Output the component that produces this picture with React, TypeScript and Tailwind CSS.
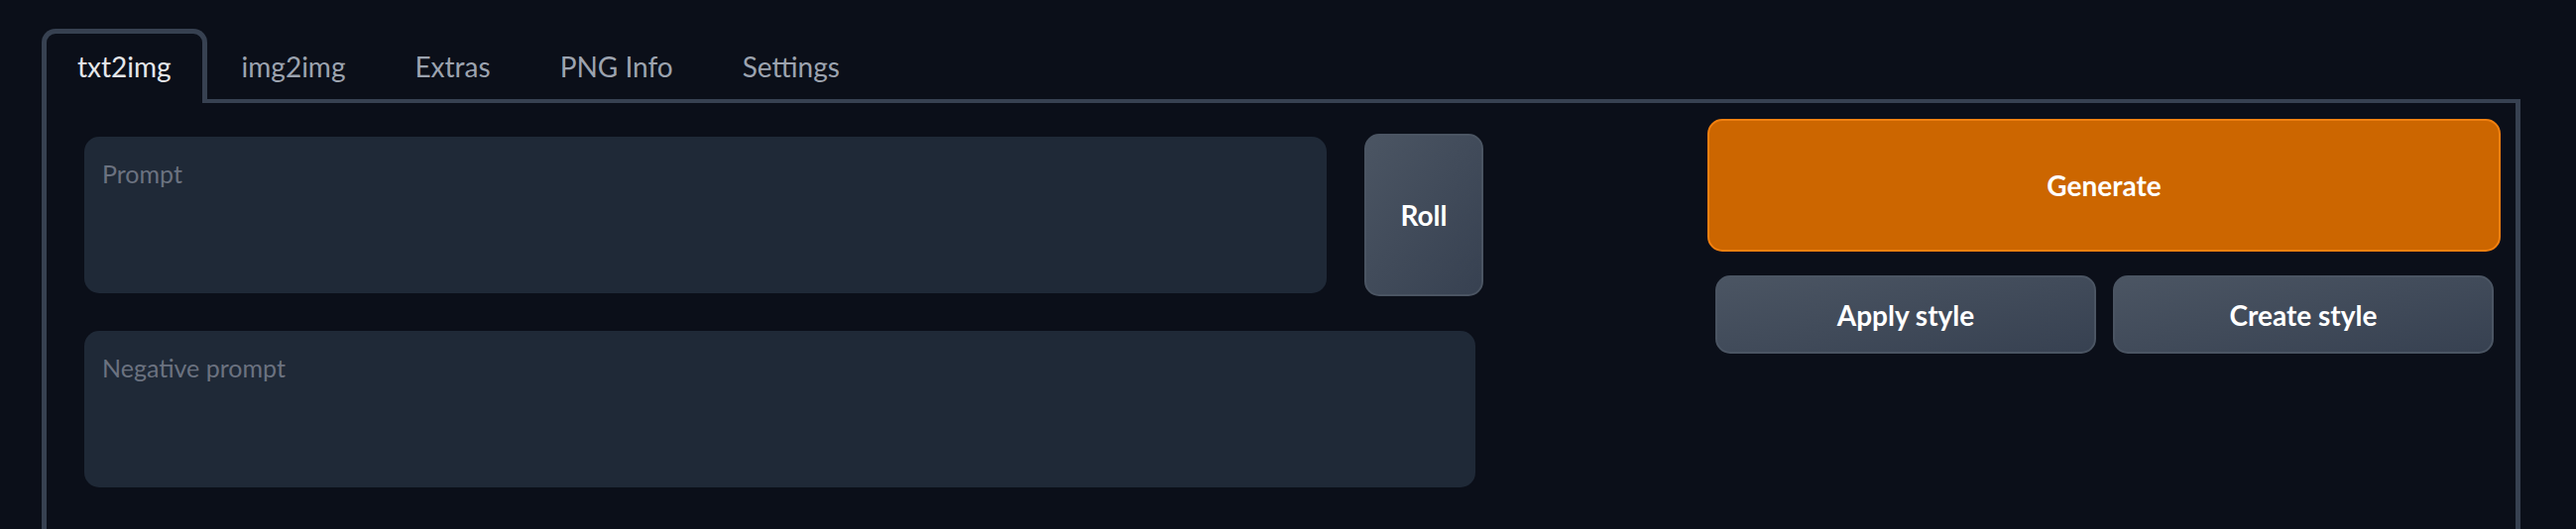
const tabs = ["img2img", "Extras", "PNG Info", "Settings"];

function GrayButton({ label, className }: { label: string; className: string }) {
  return (
    <button
      className={`flex items-center justify-center rounded-[15px] border-2 border-[#4b5563] bg-gradient-to-br from-[#4b5563] to-[#374151] text-[28px] font-bold text-white ${className}`}
    >
      {label}
    </button>
  );
}

export default function App() {
  return (
    <div className="h-[534px] w-[2598px] overflow-hidden bg-[#0b0f19] pl-[42px] pr-[56px] pt-[29px] [font-family:Lato,sans-serif]">
      {/* tab strip */}
      <div className="flex h-[75px]">
        <div className="h-[75px] rounded-t-[14px] border-x-[5px] border-t-[5px] border-[#374151] px-[31px] pt-[16px] text-[28px] leading-[34px] text-[#e5e7eb]">
          txt2img
        </div>
        <div className="flex flex-1 border-b-[4px] border-[#374151]">
          {tabs.map((tab) => (
            <div key={tab} className="px-[35px] pt-[21px] text-[28px] leading-[34px] text-[#9ca3af]">
              {tab}
            </div>
          ))}
        </div>
      </div>

      {/* panel */}
      <div className="flex h-[430px] border-x-[5px] border-[#374151] pl-[38px] pr-[15px]">
        <div className="flex w-[1411px] flex-col pt-[31px]">
          <div className="flex items-center gap-[38px]">
            <div className="h-[158px] w-[1253px] rounded-[15px] bg-[#1f2937] px-[18px] pt-[22px] text-[25px] leading-[30px] text-[#6b7280]">
              Prompt
            </div>
            <GrayButton label="Roll" className="h-[164px] w-[120px]" />
          </div>
          <div className="mt-[35px] h-[158px] w-[1403px] rounded-[15px] bg-[#1f2937] px-[18px] pt-[22px] text-[25px] leading-[30px] text-[#6b7280]">
            Negative prompt
          </div>
        </div>

        <div className="flex-1" />

        <div className="flex w-[800px] flex-col pt-[16px]">
          <button className="flex h-[134px] items-center justify-center rounded-[15px] border-2 border-[#f2800f] bg-[#cc6600] text-[28px] font-bold text-white">
            Generate
          </button>
          <div className="mt-[24px] flex gap-[17px] pl-[8px] pr-[7px]">
            <GrayButton label="Apply style" className="h-[79px] flex-1" />
            <GrayButton label="Create style" className="h-[79px] flex-1" />
          </div>
        </div>
      </div>
    </div>
  );
}
